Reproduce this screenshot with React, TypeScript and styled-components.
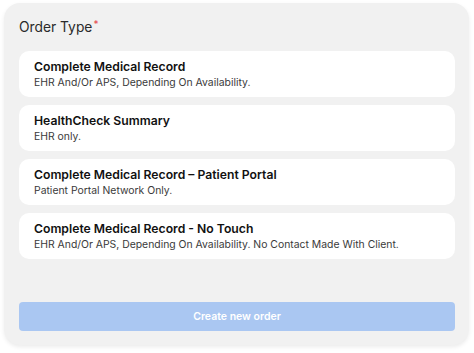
import React from 'react';
import styled, {createGlobalStyle} from "styled-components";

const GlobalStyle = createGlobalStyle`
  html, body {
    margin: 0;
    padding: 0;
    background: #ffffff;
  }
  * {
    box-sizing: border-box;
  }
`

const orderTypes = [
    {title: "Complete Medical Record", text: "EHR And/Or APS, Depending On Availability."},
    {title: "HealthCheck Summary", text: "EHR only."},
    {title: "Complete Medical Record – Patient Portal", text: "Patient Portal Network Only."},
    {title: "Complete Medical Record - No Touch", text: "EHR And/Or APS, Depending On Availability. No Contact Made With Client."},
]

export default function App() {
    return (
        <>
            <GlobalStyle/>
            <StyledPage>
                <StyledPanel>
                    <StyledLabel>Order Type<Required>*</Required></StyledLabel>
                    <OptionList>
                        {orderTypes.map(item => (
                            <OptionCard key={item.title}>
                                <OptionTitle>{item.title}</OptionTitle>
                                <OptionText>{item.text}</OptionText>
                            </OptionCard>
                        ))}
                    </OptionList>
                    <SubmitButton disabled>Create new order</SubmitButton>
                </StyledPanel>
            </StyledPage>
        </>
    );
}

const StyledPage = styled.div`
  width: 474px;
  height: 353px;
  padding: 3px 5px 8px 4px;
  font-family: Inter, "Noto Sans", sans-serif;
`

const StyledPanel = styled.section`
  display: flex;
  flex-direction: column;
  height: 342px;
  padding: 15px 14px 14px 15px;
  background: #f1f1f1;
  border-radius: 16px;
  box-shadow: 0 2px 4px rgba(0, 0, 0, 0.08);
`

const StyledLabel = styled.div`
  font-size: 13.8px;
  font-weight: 400;
  color: #2a2a2a;
  line-height: 18px;
  margin-bottom: 14px;
`

const Required = styled.span`
  position: relative;
  top: -4px;
  color: #e5484d;
  font-size: 10px;
  margin-left: 1px;
`

const OptionList = styled.div`
  display: flex;
  flex-direction: column;
  gap: 8px;
`

const OptionCard = styled.div`
  display: flex;
  flex-direction: column;
  justify-content: center;
  height: 46px;
  padding: 0 15px;
  background: #ffffff;
  border-radius: 10px;
`

const OptionTitle = styled.div`
  font-size: 12.2px;
  font-weight: 600;
  color: #111111;
  line-height: 17px;
`

const OptionText = styled.div`
  font-size: 10.4px;
  color: #3a3a3a;
  line-height: 15px;
`

const SubmitButton = styled.button`
  margin-top: auto;
  height: 29px;
  border: none;
  border-radius: 4px;
  background: #aac7f2;
  color: #ffffff;
  font-family: inherit;
  font-size: 10.5px;
  font-weight: 600;
  cursor: not-allowed;
`
